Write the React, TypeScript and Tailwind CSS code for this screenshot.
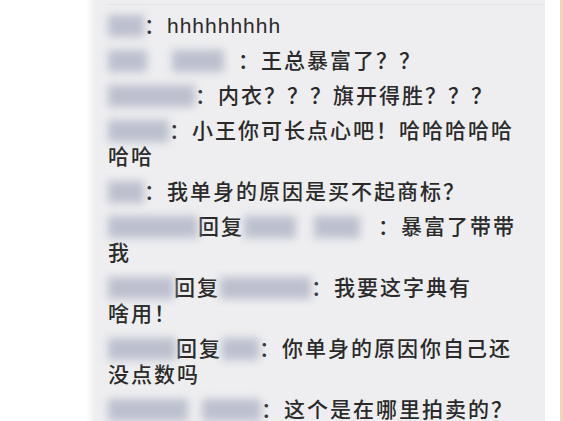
import React from "react";

function Blob({ className }: { className: string }) {
  return (
    <span className={`flex h-[26px] shrink-0 items-center ${className}`}>
      <span className="block h-[22px] w-full bg-[#bcc0ce] blur-[4px]" />
    </span>
  );
}

function Reply() {
  return <span className="shrink-0">回复</span>;
}

export default function App() {
  return (
    <div className="flex h-[421px] w-[563px] overflow-hidden bg-white">
      {/* left white margin */}
      <div className="w-[86px] shrink-0 bg-white" />
      <div className="w-[9px] shrink-0 bg-gradient-to-r from-white to-[#eeeef0]" />

      {/* Comment panel */}
      <div
        className="w-[450px] shrink-0 bg-[#eeeef0] pl-[13px] text-[21px] font-medium leading-[26px] tracking-[2px] text-[#2a2a2a]"
        style={{ fontFamily: '"Liberation Sans", "Noto Sans CJK SC", sans-serif' }}
      >
        <div className="mt-[4px] h-px w-full bg-[#e3e3e6]" />
        <div className="flex flex-col gap-[9px] whitespace-nowrap pt-[8px]">
          <div className="flex items-center">
            <Blob className="w-[36px]" />
            <span>：</span>
            <span className="tracking-[1px]">hhhhhhhhh</span>
          </div>

          <div className="flex items-center">
            <span className="flex w-[130px] shrink-0">
              <Blob className="w-[39px]" />
              <Blob className="ml-[25px] w-[52px]" />
            </span>
            <span>：王总暴富了？？</span>
          </div>

          <div className="flex items-center">
            <Blob className="w-[87px]" />
            <span>：内衣？？？旗开得胜？？？</span>
          </div>

          <div>
            <div className="flex items-center">
              <Blob className="w-[61px]" />
              <span>：小王你可长点心吧！哈哈哈哈哈</span>
            </div>
            <div>哈哈</div>
          </div>

          <div className="flex items-center">
            <Blob className="w-[36px]" />
            <span>：我单身的原因是买不起商标？</span>
          </div>

          <div>
            <div className="flex items-center">
              <Blob className="w-[90px]" />
              <Reply />
              <span className="flex w-[134px] shrink-0">
                <Blob className="w-[52px]" />
                <Blob className="ml-[18px] w-[46px]" />
              </span>
              <span>：暴富了带带</span>
            </div>
            <div>我</div>
          </div>

          <div>
            <div className="flex items-center">
              <Blob className="w-[66px]" />
              <Reply />
              <Blob className="w-[91px]" />
              <span>：我要这字典有</span>
            </div>
            <div>啥用！</div>
          </div>

          <div>
            <div className="flex items-center">
              <Blob className="w-[68px]" />
              <Reply />
              <Blob className="w-[37px]" />
              <span>：你单身的原因你自己还</span>
            </div>
            <div>没点数吗</div>
          </div>

          <div className="flex items-center">
            <span className="flex w-[153px] shrink-0">
              <Blob className="w-[80px]" />
              <Blob className="ml-[14px] w-[59px]" />
            </span>
            <span>：这个是在哪里拍卖的？</span>
          </div>
        </div>
      </div>

      {/* right margin */}
      <div className="w-[15px] shrink-0 bg-white" />
      <div className="w-[3px] shrink-0 bg-[#f2d3bb]" />
    </div>
  );
}
